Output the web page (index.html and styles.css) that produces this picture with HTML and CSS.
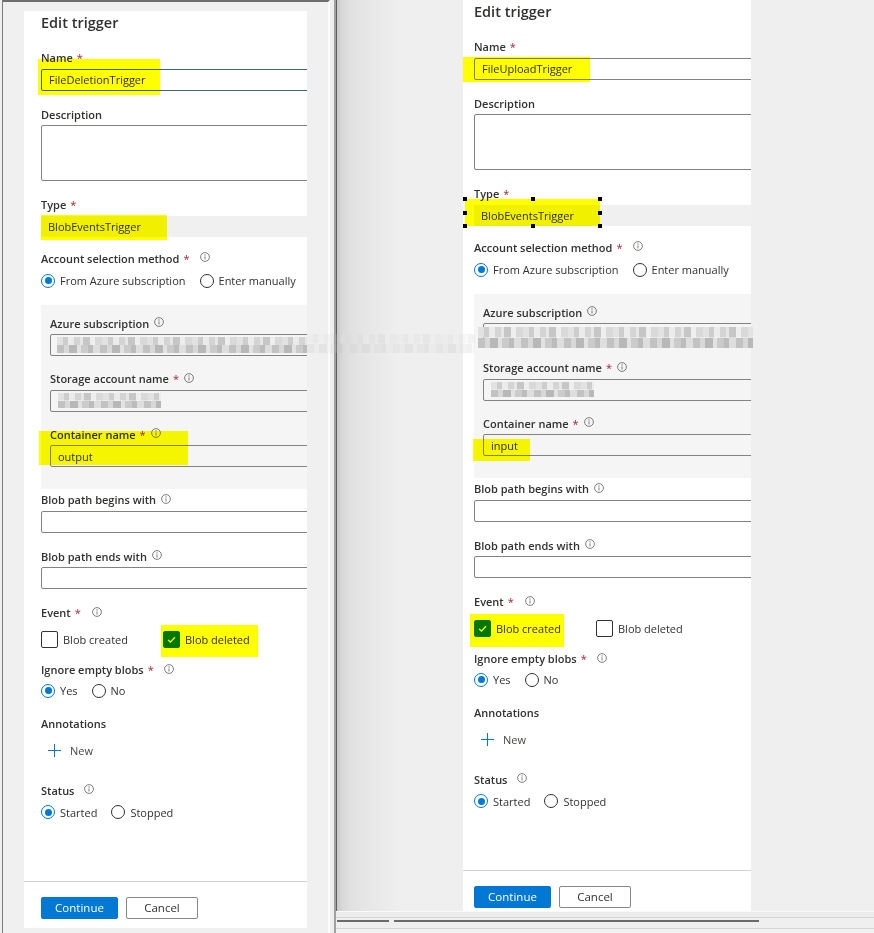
FILE: index.html
```html
<!DOCTYPE html>
<html>
<head>
<meta charset="utf-8">
<title>Edit trigger</title>
<link rel="stylesheet" href="styles.css">
</head>
<body>
<div class="desk">
  <div class="win win-left">
    <section class="panel panel-left">
      <div class="content">
        <h2 class="title">Edit trigger</h2>
        <div class="field f-name">
          <div class="label">Name<span class="req">*</span></div>
          <div class="input input-focus">FileDeletionTrigger</div>
        </div>
        <div class="field f-desc">
          <div class="label">Description</div>
          <div class="textarea"></div>
        </div>
        <div class="field f-type">
          <div class="label">Type<span class="req">*</span></div>
          <div class="readonly">BlobEventsTrigger</div>
        </div>
        <div class="field f-acct">
          <div class="label">Account selection method<span class="req">*</span><svg class="info wide" viewBox="0 0 10 10"><circle cx="5" cy="5" r="4.4"/><path d="M5 4.4v3.1"/><circle class="dot" cx="5" cy="2.9" r="0.6"/></svg></div>
          <div class="choices c-acct">
            <span class="choice"><span class="radio on"></span>From Azure subscription</span>
            <span class="choice"><span class="radio"></span>Enter manually</span>
          </div>
        </div>
        <div class="subbox">
          <div class="field f-sub-first">
            <div class="label">Azure subscription<svg class="info" viewBox="0 0 10 10"><circle cx="5" cy="5" r="4.4"/><path d="M5 4.4v3.1"/><circle class="dot" cx="5" cy="2.9" r="0.6"/></svg></div>
            <div class="input"></div>
          </div>
          <div class="field f-sub">
            <div class="label">Storage account name<span class="req">*</span><svg class="info" viewBox="0 0 10 10"><circle cx="5" cy="5" r="4.4"/><path d="M5 4.4v3.1"/><circle class="dot" cx="5" cy="2.9" r="0.6"/></svg></div>
            <div class="input"><span class="pix pix-short"></span></div>
          </div>
          <div class="field f-sub">
            <div class="label">Container name<span class="req">*</span><svg class="info" viewBox="0 0 10 10"><circle cx="5" cy="5" r="4.4"/><path d="M5 4.4v3.1"/><circle class="dot" cx="5" cy="2.9" r="0.6"/></svg></div>
            <div class="input">output</div>
          </div>
        </div>
        <div class="field f-begins">
          <div class="label">Blob path begins with<svg class="info" viewBox="0 0 10 10"><circle cx="5" cy="5" r="4.4"/><path d="M5 4.4v3.1"/><circle class="dot" cx="5" cy="2.9" r="0.6"/></svg></div>
          <div class="input"></div>
        </div>
        <div class="field f-ends">
          <div class="label">Blob path ends with<svg class="info" viewBox="0 0 10 10"><circle cx="5" cy="5" r="4.4"/><path d="M5 4.4v3.1"/><circle class="dot" cx="5" cy="2.9" r="0.6"/></svg></div>
          <div class="input"></div>
        </div>
        <div class="field f-event">
          <div class="label">Event<span class="req">*</span><svg class="info wide" viewBox="0 0 10 10"><circle cx="5" cy="5" r="4.4"/><path d="M5 4.4v3.1"/><circle class="dot" cx="5" cy="2.9" r="0.6"/></svg></div>
          <div class="checks">
            <span class="check-item"><span class="checkbox"></span>Blob created</span>
            <span class="check-item"><span class="checkbox on"><svg viewBox="0 0 17 17"><polyline points="4.6,8.9 7.3,11.4 12.4,5.9"/></svg></span>Blob deleted</span>
          </div>
        </div>
        <div class="field f-ignore">
          <div class="label">Ignore empty blobs<span class="req">*</span><svg class="info wide2" viewBox="0 0 10 10"><circle cx="5" cy="5" r="4.4"/><path d="M5 4.4v3.1"/><circle class="dot" cx="5" cy="2.9" r="0.6"/></svg></div>
          <div class="choices c-ignore">
            <span class="choice"><span class="radio on"></span>Yes</span>
            <span class="choice"><span class="radio"></span>No</span>
          </div>
        </div>
        <div class="field f-annot">
          <div class="label">Annotations</div>
          <div class="add"><svg class="plus" viewBox="0 0 13 13"><path d="M6.5 0v13M0 6.5h13"/></svg>New</div>
        </div>
        <div class="field f-status">
          <div class="label">Status<svg class="info wide2" viewBox="0 0 10 10"><circle cx="5" cy="5" r="4.4"/><path d="M5 4.4v3.1"/><circle class="dot" cx="5" cy="2.9" r="0.6"/></svg></div>
          <div class="choices c-status">
            <span class="choice"><span class="radio on"></span>Started</span>
            <span class="choice"><span class="radio"></span>Stopped</span>
          </div>
        </div>
      </div>
      <div class="footer">
        <button class="btn btn-primary btn-continue">Continue</button>
        <button class="btn btn-default btn-cancel">Cancel</button>
      </div>
      <div class="hl hl-l-name"></div>
      <div class="hl hl-l-type"></div>
      <div class="hl hl-l-cont"></div>
      <div class="hl hl-l-del"></div>
    </section>
  </div>

  <div class="win win-right">
    <div class="canvas">
      <section class="panel panel-right">
        <div class="content">
          <h2 class="title">Edit trigger</h2>
          <div class="field f-name">
            <div class="label">Name<span class="req">*</span></div>
            <div class="input">FileUploadTrigger</div>
          </div>
          <div class="field f-desc">
            <div class="label">Description</div>
            <div class="textarea"></div>
          </div>
          <div class="field f-type">
            <div class="label">Type<span class="req">*</span></div>
            <div class="readonly">BlobEventsTrigger</div>
          </div>
          <div class="field f-acct">
            <div class="label">Account selection method<span class="req">*</span><svg class="info wide" viewBox="0 0 10 10"><circle cx="5" cy="5" r="4.4"/><path d="M5 4.4v3.1"/><circle class="dot" cx="5" cy="2.9" r="0.6"/></svg></div>
            <div class="choices c-acct">
              <span class="choice"><span class="radio on"></span>From Azure subscription</span>
              <span class="choice"><span class="radio"></span>Enter manually</span>
            </div>
          </div>
          <div class="subbox">
            <div class="field f-sub-first">
              <div class="label">Azure subscription<svg class="info" viewBox="0 0 10 10"><circle cx="5" cy="5" r="4.4"/><path d="M5 4.4v3.1"/><circle class="dot" cx="5" cy="2.9" r="0.6"/></svg></div>
              <div class="input"></div>
            </div>
            <div class="field f-sub">
              <div class="label">Storage account name<span class="req">*</span><svg class="info" viewBox="0 0 10 10"><circle cx="5" cy="5" r="4.4"/><path d="M5 4.4v3.1"/><circle class="dot" cx="5" cy="2.9" r="0.6"/></svg></div>
              <div class="input"><span class="pix pix-short"></span></div>
            </div>
            <div class="field f-sub">
              <div class="label">Container name<span class="req">*</span><svg class="info" viewBox="0 0 10 10"><circle cx="5" cy="5" r="4.4"/><path d="M5 4.4v3.1"/><circle class="dot" cx="5" cy="2.9" r="0.6"/></svg></div>
              <div class="input">input</div>
            </div>
          </div>
          <div class="field f-begins">
            <div class="label">Blob path begins with<svg class="info" viewBox="0 0 10 10"><circle cx="5" cy="5" r="4.4"/><path d="M5 4.4v3.1"/><circle class="dot" cx="5" cy="2.9" r="0.6"/></svg></div>
            <div class="input"></div>
          </div>
          <div class="field f-ends">
            <div class="label">Blob path ends with<svg class="info" viewBox="0 0 10 10"><circle cx="5" cy="5" r="4.4"/><path d="M5 4.4v3.1"/><circle class="dot" cx="5" cy="2.9" r="0.6"/></svg></div>
            <div class="input"></div>
          </div>
          <div class="field f-event">
            <div class="label">Event<span class="req">*</span><svg class="info wide" viewBox="0 0 10 10"><circle cx="5" cy="5" r="4.4"/><path d="M5 4.4v3.1"/><circle class="dot" cx="5" cy="2.9" r="0.6"/></svg></div>
            <div class="checks">
              <span class="check-item"><span class="checkbox on"><svg viewBox="0 0 17 17"><polyline points="4.6,8.9 7.3,11.4 12.4,5.9"/></svg></span>Blob created</span>
              <span class="check-item"><span class="checkbox"></span>Blob deleted</span>
            </div>
          </div>
          <div class="field f-ignore">
            <div class="label">Ignore empty blobs<span class="req">*</span><svg class="info wide2" viewBox="0 0 10 10"><circle cx="5" cy="5" r="4.4"/><path d="M5 4.4v3.1"/><circle class="dot" cx="5" cy="2.9" r="0.6"/></svg></div>
            <div class="choices c-ignore">
              <span class="choice"><span class="radio on"></span>Yes</span>
              <span class="choice"><span class="radio"></span>No</span>
            </div>
          </div>
          <div class="field f-annot">
            <div class="label">Annotations</div>
            <div class="add"><svg class="plus" viewBox="0 0 13 13"><path d="M6.5 0v13M0 6.5h13"/></svg>New</div>
          </div>
          <div class="field f-status">
            <div class="label">Status<svg class="info wide2" viewBox="0 0 10 10"><circle cx="5" cy="5" r="4.4"/><path d="M5 4.4v3.1"/><circle class="dot" cx="5" cy="2.9" r="0.6"/></svg></div>
            <div class="choices c-status">
              <span class="choice"><span class="radio on"></span>Started</span>
              <span class="choice"><span class="radio"></span>Stopped</span>
            </div>
          </div>
        </div>
        <div class="footer">
          <button class="btn btn-primary btn-continue">Continue</button>
          <button class="btn btn-default btn-cancel">Cancel</button>
        </div>
        <div class="hl hl-r-name"></div>
        <div class="hl hl-r-type">
          <span class="handle h-tl"></span><span class="handle h-tc"></span><span class="handle h-tr"></span>
          <span class="handle h-ml"></span><span class="handle h-mr"></span>
          <span class="handle h-bl"></span><span class="handle h-bc"></span><span class="handle h-br"></span>
        </div>
        <div class="hl hl-r-cont"></div>
        <div class="hl hl-r-cre"></div>
      </section>
    </div>
    <div class="hscroll">
      <span class="thumb thumb-a"></span>
      <span class="thumb thumb-b"></span>
    </div>
  </div>

  <div class="pix pix-l"></div>
  <div class="pix pix-gap"></div>
  <div class="pix pix-r"></div>
</div>
</body>
</html>
```
FILE: styles.css
```css
* { box-sizing: border-box; }
html, body { margin: 0; padding: 0; }
body {
  width: 874px;
  height: 933px;
  overflow: hidden;
  background: #efefef;
  font-family: "Open Sans", "Noto Sans", sans-serif;
  font-size: 11px;
  color: #323130;
}
.desk {
  position: relative;
  display: flex;
  height: 933px;
}

/* windows */
.win-left {
  flex: none;
  width: 328px;
  height: 933px;
  margin-left: 2px;
  border-left: 1px solid #7c7c7c;
  border-top: 2px solid #6e6e6e;
  border-right: 2px solid #fbfbfb;
  background: #f0f0f0;
  padding: 9px 0 0 21px;
}
.win-right {
  flex: 1;
  margin-left: 4px;
  display: flex;
  flex-direction: column;
  border-left: 2px solid #a2a2a2;
}
.canvas {
  flex: none;
  height: 911px;
  overflow: hidden;
  border-left: 1px solid #5e5e5e;
  padding-left: 126px;
  background: linear-gradient(90deg, #c9c9c9 0, #d8d8d8 5px, #e1e1e1 14px, #e7e7e7 30px, #ebebeb 48px, #efefef 62px);
}
.hscroll {
  flex: none;
  height: 22px;
  display: flex;
  padding-top: 9px;
  background: linear-gradient(180deg, #fafafa 0 1px, #ececec 1px 6px, #d3d3d3 6px 7px, #efefef 7px 17px, #d6d6d6 17px 18px, #f0f0f0 18px);
}
.thumb { height: 2px; background: #6b6b6b; }
.thumb-a { width: 52px; margin-left: 1px; }
.thumb-b { width: 365px; margin-left: 5px; }

/* panel */
.panel {
  position: relative;
  flex: none;
  height: 917px;
  background: #fff;
  display: flex;
  flex-direction: column;
  overflow: hidden;
}
.panel-left { width: 283px; --pad: 17px; }
.panel-right { width: 288px; --pad: 11px; }
.content {
  flex: 1;
  padding-left: var(--pad);
}
.title {
  margin: 1px 0 0;
  font-size: 14.5px;
  line-height: 22px;
  font-weight: 600;
  color: #323130;
}

.label {
  display: flex;
  align-items: center;
  height: 18px;
  line-height: 18px;
  font-weight: 600;
  white-space: nowrap;
}
.req {
  margin-left: 4px;
  color: #a4262c;
  font-weight: 400;
  font-size: 11px;
}
.info {
  flex: none;
  width: 10px;
  height: 10px;
  align-self: flex-start;
  margin-top: 2.5px;
  margin-left: 5px;
  fill: none;
  stroke: #605e5c;
  stroke-width: 0.8;
}
.info .dot { fill: #605e5c; stroke: none; }
.info.wide { margin-left: 11px; }
.info.wide2 { margin-left: 10px; }

.f-name, .f-desc, .f-type { margin-top: 15px; }
.f-acct { margin-top: 13px; }
.f-sub-first { margin-top: 0; }
.f-sub { margin-top: 14px; }
.f-begins { margin-top: 2px; }
.f-ends, .f-event { margin-top: 15px; }
.f-ignore { margin-top: 13px; }
.f-annot { margin-top: 15.5px; }
.f-status { margin-top: 22px; }

.input, .textarea, .readonly {
  width: 330px;
  margin-top: 1.5px;
}
.input {
  height: 22px;
  border: 1px solid #858381;
  border-radius: 2px;
  padding: 0 7px;
  display: flex;
  align-items: center;
  white-space: nowrap;
}
.input-focus { border-color: #44607e; }
.textarea {
  height: 56px;
  border: 1px solid #858381;
  border-radius: 2px;
}
.readonly {
  height: 21px;
  background: #f0f0f0;
  padding-left: 7px;
  display: flex;
  align-items: center;
}

.subbox {
  margin-top: 15px;
  background: #f5f5f6;
  padding: 10px 0 22px 9px;
}

.choices {
  display: flex;
  align-items: center;
  height: 18px;
}
.c-acct { margin-top: 4px; }
.c-ignore { margin-top: 2.5px; }
.c-status { margin-top: 3.5px; }
.choice {
  display: flex;
  align-items: center;
  gap: 5px;
  margin-right: 14px;
  white-space: nowrap;
}
.radio {
  flex: none;
  width: 14px;
  height: 14px;
  border-radius: 50%;
  border: 1px solid #323130;
  background: #fff;
  display: grid;
  place-items: center;
}
.radio.on { border-color: #0078d4; }
.radio.on::after {
  content: "";
  width: 7px;
  height: 7px;
  border-radius: 50%;
  background: #0078d4;
}

.checks {
  display: flex;
  align-items: center;
  height: 17px;
  margin-top: 9px;
}
.check-item {
  width: 122px;
  display: flex;
  align-items: center;
  gap: 5px;
  white-space: nowrap;
}
.checkbox {
  flex: none;
  width: 17px;
  height: 17px;
  border: 1px solid #323130;
  border-radius: 2px;
  background: #fff;
}
.checkbox.on {
  background: #0078d4;
  border-color: #0078d4;
}
.checkbox svg {
  display: block;
  width: 15px;
  height: 15px;
  fill: none;
  stroke: #fff;
  stroke-width: 1.4;
}

.add {
  display: flex;
  align-items: center;
  height: 18px;
  margin-top: 8.5px;
  padding-left: 7px;
  gap: 9px;
  color: #484644;
}
.plus {
  width: 13px;
  height: 13px;
  fill: none;
  stroke: #0078d4;
  stroke-width: 1;
}

/* footer */
.footer {
  flex: none;
  border-top: 1px solid #d2d2d2;
  padding: 15px 0 9px var(--pad);
  display: flex;
  gap: 8px;
}
.btn {
  height: 22px;
  padding: 0;
  border-radius: 2px;
  font-family: inherit;
  font-size: 11.5px;
  line-height: 20px;
}
.btn-primary {
  width: 77px;
  background: #0078d4;
  border: 1px solid #0078d4;
  color: #fff;
}
.btn-default {
  width: 72px;
  background: #fff;
  border: 1px solid #8a8886;
  color: #323130;
}

/* yellow highlight overlays */
.hl {
  position: absolute;
  background: #ffff00;
  mix-blend-mode: multiply;
}
.hl-l-name { left: 14px; top: 48px; width: 122px; height: 36px; }
.hl-l-type { left: 17px; top: 204px; width: 126px; height: 25px; }
.hl-l-cont { left: 15px; top: 420px; width: 149px; height: 34px; }
.hl-l-del  { left: 137px; top: 614px; width: 97px; height: 32px; }
.hl-r-name { left: 0; top: 57px; width: 127px; height: 25px; }
.hl-r-type { left: 2px; top: 199px; width: 135px; height: 27px; }
.hl-r-cont { left: 10px; top: 439px; width: 57px; height: 22px; }
.hl-r-cre  { left: 7px; top: 614px; width: 94px; height: 33px; }

.handle {
  position: absolute;
  width: 4px;
  height: 4px;
  background: #000;
}
.h-tl { left: -2px; top: -2px; }
.h-tc { left: calc(50% - 2px); top: -2px; }
.h-tr { right: -2px; top: -2px; }
.h-ml { left: -2px; top: calc(50% - 2px); }
.h-mr { right: -2px; top: calc(50% - 2px); }
.h-bl { left: -2px; bottom: -2px; }
.h-bc { left: calc(50% - 2px); bottom: -2px; }
.h-br { right: -2px; bottom: -2px; }

/* pixelated privacy blur */
.pix {
  display: block;
  background:
    repeating-linear-gradient(90deg, #e2e2e2 0 6px, #cdcdcd 6px 11px, #ebebeb 11px 17px, #d4d4d4 17px 23px, #e6e6e6 23px 26px, #c6c6c6 26px 33px, #eeeeee 33px 38px, #d9d9d9 38px 45px) 0 0 / 100% 50% no-repeat,
    repeating-linear-gradient(90deg, #c2c2c2 0 7px, #d8d8d8 7px 12px, #b8b8b8 12px 20px, #e2e2e2 20px 24px, #cbcbcb 24px 31px, #bcbcbc 31px 36px, #dedede 36px 43px) 0 100% / 100% 50% no-repeat;
}
.pix-short { width: 103px; height: 15px; }
.pix-l { position: absolute; left: 57px; top: 337px; width: 250px; height: 16px; }
.pix-gap { position: absolute; left: 307px; top: 334px; width: 168px; height: 19px; opacity: 0.2; }
.pix-r { position: absolute; left: 478px; top: 327px; width: 275px; height: 21px; }
```
